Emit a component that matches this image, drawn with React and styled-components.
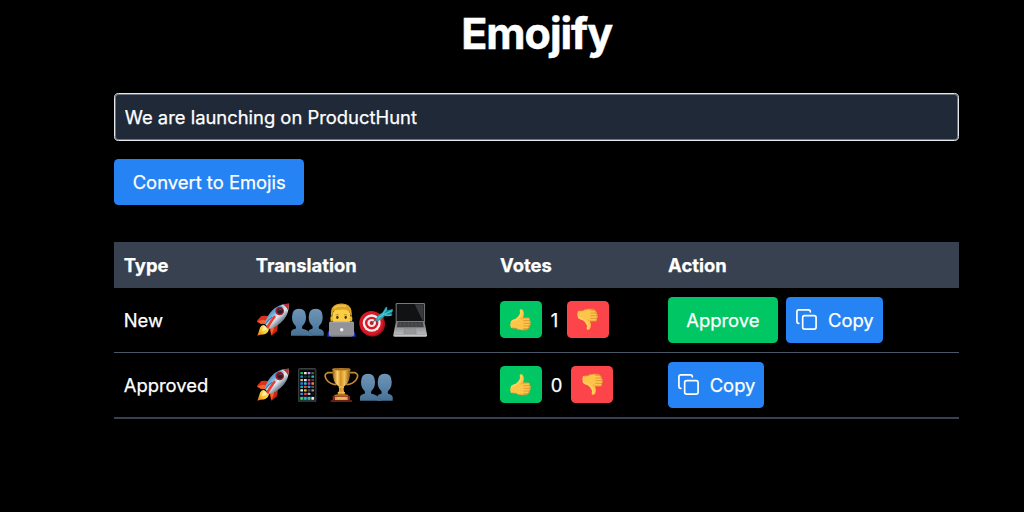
import React from "react";
import styled, { createGlobalStyle } from "styled-components";

const GlobalStyle = createGlobalStyle`
  * { box-sizing: border-box; }
  html, body { margin: 0; background: #000; }
  body { font-family: "Inter", sans-serif; font-size: 18.4px; color: #fff; overflow: hidden; -webkit-text-stroke: 0.25px currentColor; }
`;

const Page = styled.main`
  width: 1024px;
  height: 512px;
  padding: 5px 65.1px 0 114.4px;
  background: #000;
`;

const Title = styled.h1`
  margin: 0 0 31.5px;
  height: 56px;
  line-height: 56px;
  font-size: 43px;
  font-weight: 700;
  letter-spacing: -1.05px;
  text-align: center;
  -webkit-text-stroke: 0.5px currentColor;
`;

const Form = styled.form`
  display: flex;
  flex-direction: column;
  align-items: flex-start;
  gap: 18px;
  margin-bottom: 36.4px;
`;

const TextInput = styled.input`
  width: 100%;
  height: 48.6px;
  padding: 0 9.4px;
  border: 1px solid #e5e7eb;
  border-radius: 4.6px;
  background: #1f2937;
  box-shadow: inset 0 0 0 1px rgba(229, 231, 235, 0.4);
  color: #fff;
  font: inherit;
  outline: none;
  -webkit-text-stroke: inherit;
`;

const colors = { blue: "#2583f3", green: "#00c763", red: "#fb454a" };

const Button = styled.button`
  display: inline-flex;
  align-items: center;
  justify-content: center;
  gap: 9.5px;
  height: 46.2px;
  width: ${(p) => p.$width}px;
  padding: 0;
  border: 0;
  border-radius: 4.6px;
  background: ${(p) => colors[p.$tone]};
  color: #fff;
  font: inherit;
`;

const VoteButton = styled(Button)`
  width: 41.6px;
  height: 37.4px;
`;

const Table = styled.table`
  width: 844.5px;
  table-layout: fixed;
  border-collapse: separate;
  border-spacing: 0;
`;

const Head = styled.th`
  width: ${(p) => p.$width}px;
  height: 46px;
  padding: 0 9.3px;
  background: #374150;
  text-align: left;
  font-weight: 700;
`;

const Cell = styled.td`
  height: 65px;
  padding: 0 9.3px;
  border-bottom: 1px solid #4b5868;

  tr:last-child > & {
    height: 66px;
    border-bottom: 2px solid #374150;
  }
`;

const Group = styled.div`
  display: flex;
  align-items: center;
  gap: ${(p) => p.$gap || 0}px;
`;

const EmojiGroup = styled(Group)`
  padding-top: 1px;
`;

const EmojiSvg = styled.svg`
  display: block;
  flex: none;
  width: ${(p) => p.$size || 34.4}px;
  height: ${(p) => p.$size || 34.4}px;
`;

const Rocket = () => (
  <EmojiSvg viewBox="0 0 103 103">
    <defs>
      <linearGradient id="hull" x1="0.2" y1="0.2" x2="0.75" y2="0.8">
        <stop offset="0" stopColor="#397bb5" />
        <stop offset="0.32" stopColor="#72b1de" />
        <stop offset="0.55" stopColor="#e8eef2" />
        <stop offset="0.78" stopColor="#8b9aa8" />
        <stop offset="1" stopColor="#3e4c60" />
      </linearGradient>
      <linearGradient id="flame" x1="1" y1="0" x2="0" y2="1">
        <stop offset="0" stopColor="#fff176" />
        <stop offset="0.6" stopColor="#f7c52b" />
        <stop offset="1" stopColor="#e8641b" />
      </linearGradient>
    </defs>
    <path d="M16 39Q27 36 42 41L27 63 15 62 3 57Q1 55 7 49Z" fill="#df2f18" />
    <path d="M5 55L22 50 34 54 28 63 14 62Z" fill="#f2642e" />
    <path d="M64 58Q67 75 62 85L46 98Q43 95 44 84L38 74 48 60Z" fill="#d5230f" />
    <path d="M44 73L55 66 53 79 47 94 43 84Z" fill="#f4652b" />
    <path d="M24 66Q13 66 10 81L4 98Q13 94 23 94 37 91 39 77Z" fill="url(#flame)" />
    <path d="M25 69Q19 73 18 83 27 84 34 77Z" fill="#fff3a0" />
    <path d="M99 2Q69 1 49 22 33 38 26 62L41 78Q65 71 83 50 99 31 99 2Z" fill="url(#hull)" />
    <path d="M99 2Q87 2 77 6 92 11 95 25 99 14 99 2Z" fill="#b93439" />
    <path d="M77 6Q91 11 95 25" fill="none" stroke="#d7e7ee" strokeWidth="3" />
    <ellipse cx="71" cy="24" rx="13" ry="13" fill="#a71c28" />
    <ellipse cx="72" cy="24" rx="8" ry="8" fill="#251e28" />
    <path d="M68 22Q71 17 77 20" fill="none" stroke="#66737c" strokeWidth="2" />
    <path d="M55 42Q47 52 35 72" fill="none" stroke="#f2392c" strokeWidth="8" strokeLinecap="round" />
    <path d="M49 42Q38 49 27 64" fill="none" stroke="#2a5a82" strokeWidth="3" opacity=".7" />
  </EmojiSvg>
);

const People = () => (
  <EmojiSvg viewBox="0 0 103 103">
    <defs>
      <linearGradient id="bust" x1="0" y1="0" x2="0" y2="1">
        <stop offset="0" stopColor="#7095b5" />
        <stop offset="0.6" stopColor="#5681a6" />
        <stop offset="1" stopColor="#477194" />
      </linearGradient>
    </defs>
    <path d="M55 98V86Q56 79 67 77 69 74 67 69 56 61 56 42 56 17 77 17 98 17 98 42 98 61 87 69 85 74 87 77 99 79 101 87V98Z" fill="url(#bust)" />
    <path d="M3 98V86Q5 79 17 77 19 74 17 69 6 60 6 42 6 17 27 17 48 17 48 42 48 60 37 69 35 74 37 77 50 79 54 84L68 98Z" fill="url(#bust)" />
    <path d="M50 81L68 97" stroke="#365e80" strokeWidth="1.5" opacity=".7" />
  </EmojiSvg>
);

const Technologist = () => (
  <EmojiSvg viewBox="0 0 103 103">
    <path d="M10 101Q8 78 31 75H72Q94 78 95 101Z" fill="#1e35c5" />
    <path d="M33 65H68V87H33Z" fill="#e5a927" />
    <ellipse cx="52" cy="43" rx="28" ry="33" fill="#fbcf43" />
    <ellipse cx="23" cy="47" rx="4" ry="8" fill="#efb52d" />
    <ellipse cx="81" cy="47" rx="4" ry="8" fill="#efb52d" />
    <path d="M21 40Q18 10 38 4 52-1 66 4 86 11 83 40L78 34Q79 26 72 23 62 19 53 20 38 20 31 22 25 27 26 34Z" fill="#dca32a" />
    <path d="M30 15Q42 5 66 10" fill="none" stroke="#f1c44c" strokeWidth="5" />
    <path d="M35 36Q39 33 44 36M60 36Q65 33 69 36" fill="none" stroke="#a56d1c" strokeWidth="2" />
    <ellipse cx="40" cy="43" rx="3.5" ry="5" fill="#492c13" />
    <ellipse cx="65" cy="43" rx="3.5" ry="5" fill="#492c13" />
    <rect x="15" y="56" width="75" height="43" rx="4" fill="#929399" />
    <path d="M18 57H87" stroke="#b7b8bc" strokeWidth="2" />
    <path d="M20 98H85V102H20Z" fill="#65666d" />
    <circle cx="53" cy="80" r="5.3" fill="#f0f0f3" />
  </EmojiSvg>
);

const Target = () => (
  <EmojiSvg viewBox="0 0 103 103">
    <ellipse cx="40" cy="63" rx="38" ry="37" fill="#a9111c" />
    <ellipse cx="37" cy="60" rx="36" ry="36" fill="#d71927" />
    <ellipse cx="38" cy="60" rx="27" ry="26" fill="#f5eeee" />
    <ellipse cx="38" cy="60" rx="20" ry="19" fill="#d31b29" />
    <ellipse cx="38" cy="60" rx="13" ry="12" fill="#f9eded" />
    <ellipse cx="38" cy="60" rx="6" ry="6" fill="#cd1726" />
    <path d="M39 59L55 46" stroke="#84545a" strokeWidth="3" />
    <path d="M53 43Q63 30 76 27L81 33Q75 45 58 54Q53 56 51 51Z" fill="#23a9b9" />
    <path d="M70 30L79 13Q83 10 85 13L84 22 101 18Q104 23 97 31L101 34Q96 43 75 38Z" fill="#168899" />
    <path d="M71 33L83 17M75 34L99 23M77 36L97 37" stroke="#47c4cd" strokeWidth="4" />
    <path d="M56 46L76 32" stroke="#60d0d4" strokeWidth="3" />
  </EmojiSvg>
);

const Laptop = () => (
  <EmojiSvg viewBox="0 0 103 103">
    <defs>
      <linearGradient id="base" x1="0" y1="0" x2="0" y2="1">
        <stop stopColor="#77777a" />
        <stop offset="1" stopColor="#b9babb" />
      </linearGradient>
    </defs>
    <rect x="8" y="0" width="88" height="59" rx="4" fill="#77787a" />
    <rect x="11" y="3" width="82" height="53" rx="2" fill="#111214" />
    <path d="M65 4H92V53H89Z" fill="#38393b" />
    <path d="M9 54H94L102 95H1Z" fill="url(#base)" />
    <path d="M15 57H89L92 73H11Z" fill="#3a3b3e" />
    <path d="M14 61H90M13 65H91M12 69H91M24 57L21 73M35 57L33 73M46 57V73M57 57V73M68 57L70 73M79 57L82 73" stroke="#606165" strokeWidth="1" />
    <path d="M35 76H67L70 92H32Z" fill="#97989a" stroke="#77787b" />
    <path d="M1 94H102V98Q101 101 97 101H6Q1 101 1 97Z" fill="#c5c6c8" />
  </EmojiSvg>
);

const appColors = ["#24b967", "#e8f1ed", "#c39ae0", "#515e60", "#268bba", "#24333d", "#1c4b60", "#29bcc5", "#d2bd86", "#f0f0f0", "#d54e55", "#40474c", "#277de0", "#2bbadd", "#b33ac5", "#f18a26", "#13aeb1", "#da4d44", "#3ba1db", "#535962", "#efefef", "#e4c359", "#4d5357", "#8f9498", "#258de4", "#df4054", "#b9bcc0", "#151719"];

const Phone = () => (
  <EmojiSvg viewBox="0 0 103 103">
    <rect x="24" y="0" width="55" height="103" rx="7" fill="#47484b" />
    <rect x="26" y="2" width="51" height="99" rx="5" fill="#242527" />
    <rect x="29" y="7" width="45" height="90" rx="3" fill="#030405" />
    {appColors.map((color, i) => (
      <rect key={i} x={31 + (i % 4) * 11} y={12 + Math.floor(i / 4) * 10.3} width="8" height="7" rx="1.5" fill={color} />
    ))}
    <rect x="29" y="85" width="45" height="13" rx="3" fill="#2b4349" />
    {["#45d261", "#31b7ce", "#52bd9d", "#eee9ee"].map((color, i) => (
      <rect key={color} x={31 + i * 11} y="87" width="8" height="8" rx="2" fill={color} />
    ))}
  </EmojiSvg>
);

const Trophy = () => (
  <EmojiSvg viewBox="0 0 103 103">
    <defs>
      <linearGradient id="gold">
        <stop stopColor="#925508" />
        <stop offset="0.28" stopColor="#ffd36c" />
        <stop offset="0.46" stopColor="#d69126" />
        <stop offset="0.67" stopColor="#f2c357" />
        <stop offset="1" stopColor="#865006" />
      </linearGradient>
    </defs>
    <g transform="translate(1 0)">
      <path d="M28 14H10Q-3 19 6 34 16 49 36 50M74 14H92Q105 19 96 34 86 49 66 50" fill="none" stroke="#c98b32" strokeWidth="5" />
      <path d="M24 3H78Q78 47 58 56 56 65 61 79H41Q46 65 44 56 24 47 24 3Z" fill="url(#gold)" />
      <ellipse cx="51" cy="4" rx="27" ry="4" fill="#aa6b17" stroke="#e1aa4b" strokeWidth="1.5" />
      <path d="M43 57H59M40 74H62" stroke="#f0ba51" strokeWidth="4" />
      <path d="M32 80Q51 74 70 80L73 84H28Z" fill="#b56c19" />
      <path d="M25 84H77V97H25Z" fill="#8b2d18" />
      <path d="M19 96H83V103H19Z" fill="#642010" />
      <path d="M32 86H70V96H32Z" fill="#dfa24d" />
      <path d="M38 89H64M38 92H64" stroke="#f3ce83" strokeWidth="1.5" />
    </g>
  </EmojiSvg>
);

const ThumbArt = () => (
  <>
    <path d="M6 39Q12 33 20 32 29 27 33 16L32 7Q33 2 38 4 46 8 44 22L42 29H59Q65 31 62 37 67 41 64 45 66 50 62 53 63 58 58 61 54 66 37 66 25 66 20 61L6 60Q1 50 6 39Z" fill="#ffc54b" />
    <path d="M42 30H59Q65 33 61 38H44M61 38Q66 41 63 46H45M63 46Q65 52 60 54H45M60 54Q62 60 56 62H44" fill="none" stroke="#d68825" strokeWidth="2" strokeLinecap="round" />
    <path d="M43 29Q36 30 36 35" fill="none" stroke="#e49a30" strokeWidth="2" />
    <path d="M7 42Q15 35 23 35 32 29 36 17V8" fill="none" stroke="#ffda69" strokeWidth="3" strokeLinecap="round" />
    <path d="M8 60L21 61Q27 66 39 66H50Q59 65 60 60" fill="none" stroke="#d68b2b" strokeWidth="2" />
  </>
);

const Thumb = ({ down }) => (
  <EmojiSvg $size={23} viewBox="0 0 69 69">
    <g transform={down ? "translate(0 69) scale(1 -1)" : undefined}>
      <ThumbArt />
    </g>
  </EmojiSvg>
);

const CopyIcon = () => (
  <svg width="23" height="23" viewBox="0 0 24 24" fill="none" stroke="currentColor" strokeWidth="1.75" strokeLinecap="round" strokeLinejoin="round">
    <rect x="8" y="8" width="14" height="14" rx="2" />
    <path d="M4 16c-1.1 0-2-.9-2-2V4c0-1.1.9-2 2-2h10c1.1 0 2 .9 2 2" />
  </svg>
);

const columns = [["Type", 132], ["Translation", 244.4], ["Votes", 168], ["Action", 300.1]];
const rows = [
  { type: "New", emojis: [Rocket, People, Technologist, Target, Laptop], votes: 1 },
  { type: "Approved", emojis: [Rocket, Phone, Trophy, People], votes: 0 },
];

export default function App() {
  return (
    <Page>
      <GlobalStyle />
      <Title>Emojify</Title>
      <Form onSubmit={(e) => e.preventDefault()}>
        <TextInput aria-label="Text to convert" defaultValue="We are launching on ProductHunt" />
        <Button $tone="blue" $width={189.6}>Convert to Emojis</Button>
      </Form>
      <Table>
        <thead>
          <tr>{columns.map(([label, width]) => <Head key={label} $width={width}>{label}</Head>)}</tr>
        </thead>
        <tbody>
          {rows.map(({ type, emojis, votes }) => (
            <tr key={type}>
              <Cell>{type}</Cell>
              <Cell><EmojiGroup>{emojis.map((Emoji, i) => <Emoji key={i} />)}</EmojiGroup></Cell>
              <Cell>
                <Group $gap={9}>
                  <VoteButton $tone="green" aria-label="Vote up"><Thumb /></VoteButton>
                  <span>{votes}</span>
                  <VoteButton $tone="red" aria-label="Vote down"><Thumb down /></VoteButton>
                </Group>
              </Cell>
              <Cell>
                <Group $gap={8.7}>
                  {type === "New" && <Button $tone="green" $width={109.6}>Approve</Button>}
                  <Button $tone="blue" $width={96.4}><CopyIcon />Copy</Button>
                </Group>
              </Cell>
            </tr>
          ))}
        </tbody>
      </Table>
    </Page>
  );
}
